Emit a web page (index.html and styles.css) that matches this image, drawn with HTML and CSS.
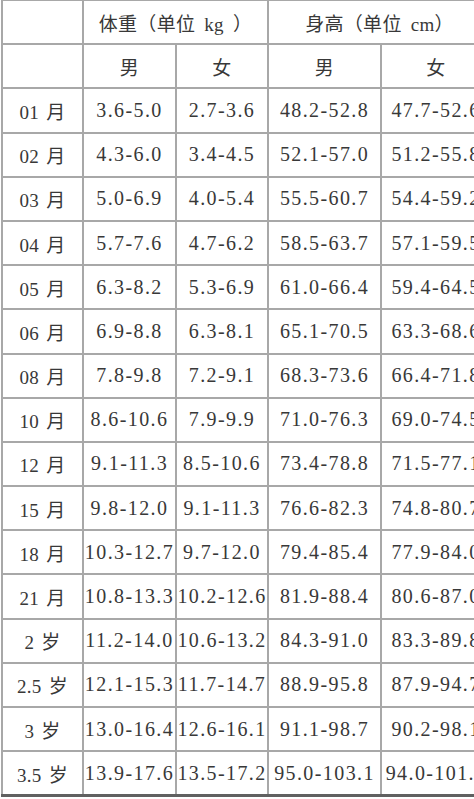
FILE: index.html
```html
<!DOCTYPE html>
<html lang="zh-CN">
<head>
<meta charset="utf-8">
<title>婴幼儿体重身高标准</title>
<link rel="stylesheet" href="styles.css">
</head>
<body>
<table class="chart">
  <colgroup>
    <col class="c-age">
    <col class="c-w1">
    <col class="c-w2">
    <col class="c-h1">
    <col class="c-h2">
  </colgroup>
  <thead>
    <tr><th></th><th colspan="2">体重（单位 kg ）</th><th colspan="2">身高（单位 cm）</th></tr>
    <tr><th></th><th>男</th><th>女</th><th>男</th><th>女</th></tr>
  </thead>
  <tbody>
    <tr><td>01 月</td><td>3.6-5.0</td><td>2.7-3.6</td><td>48.2-52.8</td><td>47.7-52.6</td></tr>
    <tr><td>02 月</td><td>4.3-6.0</td><td>3.4-4.5</td><td>52.1-57.0</td><td>51.2-55.8</td></tr>
    <tr><td>03 月</td><td>5.0-6.9</td><td>4.0-5.4</td><td>55.5-60.7</td><td>54.4-59.2</td></tr>
    <tr><td>04 月</td><td>5.7-7.6</td><td>4.7-6.2</td><td>58.5-63.7</td><td>57.1-59.5</td></tr>
    <tr><td>05 月</td><td>6.3-8.2</td><td>5.3-6.9</td><td>61.0-66.4</td><td>59.4-64.5</td></tr>
    <tr><td>06 月</td><td>6.9-8.8</td><td>6.3-8.1</td><td>65.1-70.5</td><td>63.3-68.6</td></tr>
    <tr><td>08 月</td><td>7.8-9.8</td><td>7.2-9.1</td><td>68.3-73.6</td><td>66.4-71.8</td></tr>
    <tr><td>10 月</td><td>8.6-10.6</td><td>7.9-9.9</td><td>71.0-76.3</td><td>69.0-74.5</td></tr>
    <tr><td>12 月</td><td>9.1-11.3</td><td>8.5-10.6</td><td>73.4-78.8</td><td>71.5-77.1</td></tr>
    <tr><td>15 月</td><td>9.8-12.0</td><td>9.1-11.3</td><td>76.6-82.3</td><td>74.8-80.7</td></tr>
    <tr><td>18 月</td><td>10.3-12.7</td><td>9.7-12.0</td><td>79.4-85.4</td><td>77.9-84.0</td></tr>
    <tr><td>21 月</td><td>10.8-13.3</td><td>10.2-12.6</td><td>81.9-88.4</td><td>80.6-87.0</td></tr>
    <tr><td>2 岁</td><td>11.2-14.0</td><td>10.6-13.2</td><td>84.3-91.0</td><td>83.3-89.8</td></tr>
    <tr><td>2.5 岁</td><td>12.1-15.3</td><td>11.7-14.7</td><td>88.9-95.8</td><td>87.9-94.7</td></tr>
    <tr><td>3 岁</td><td>13.0-16.4</td><td>12.6-16.1</td><td>91.1-98.7</td><td>90.2-98.1</td></tr>
    <tr class="last"><td>3.5 岁</td><td>13.9-17.6</td><td>13.5-17.2</td><td>95.0-103.1</td><td>94.0-101.4</td></tr>
  </tbody>
</table>
</body>
</html>
```
FILE: styles.css
```css
html, body {
  margin: 0;
  padding: 0;
  background: #ffffff;
  overflow: hidden;
}

.chart {
  border-collapse: collapse;
  table-layout: fixed;
  width: 491px;
  margin: -1px 0 0 1px;
  color: #383838;
  font-family: "Liberation Serif", "Noto Sans CJK SC", serif;
  font-size: 20px;
}

.c-age { width: 81px; }
.c-w1 { width: 93px; }
.c-w2 { width: 92px; }
.c-h1 { width: 113px; }
.c-h2 { width: 110px; }

.chart th,
.chart td {
  border: 2px solid #a8a8a8;
  padding: 0;
  height: 42.2px;
  text-align: center;
  vertical-align: middle;
  white-space: nowrap;
  font-weight: normal;
  overflow: hidden;
}

.chart th {
  font-size: 19px;
  letter-spacing: 0.3px;
  word-spacing: 4px;
}

.chart td {
  letter-spacing: 1.4px;
}

.chart td:first-child {
  letter-spacing: 0.3px;
  word-spacing: 2px;
  font-size: 19px;
}

.chart tr.last td {
  border-bottom: 3px solid #606060;
}
```
